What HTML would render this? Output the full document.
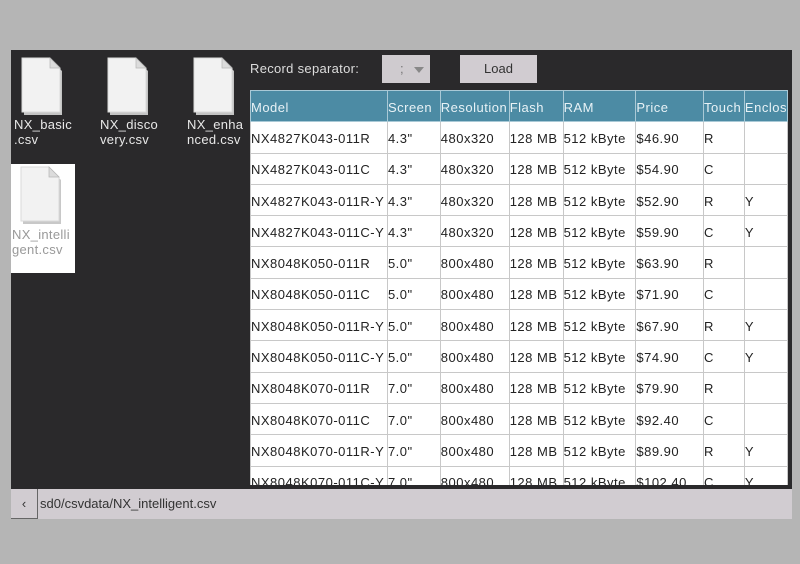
<!DOCTYPE html>
<html><head><style>
body{margin:0;width:800px;height:564px;background:#b5b5b5;position:relative;overflow:hidden;font-family:"Liberation Sans",sans-serif;}
.panel{position:absolute;left:11px;top:50px;width:781px;height:439px;background:#2a292b;}
.ic{position:absolute;}
.lbl{position:absolute;color:#e8e8e8;font-size:13px;line-height:15px;letter-spacing:0.3px;}
.sel{position:absolute;left:11px;top:164px;width:64px;height:109px;background:#fff;}
.tw{position:absolute;left:250px;top:90px;width:538px;height:395px;overflow:hidden;}
table{border-collapse:collapse;font-size:13px;table-layout:fixed;letter-spacing:0.5px;}
td{border:1px solid #c8c8c8;height:28.3px;padding:2px 0 0 0;white-space:nowrap;overflow:hidden;color:#222;background:#fff;}
tr.h td{background:#4c8ba4;color:#e8f2f6;border-color:#a9c9d6;}
.bar{position:absolute;left:11px;top:489px;width:781px;height:30px;background:#d1ccd1;}
</style></head><body>
<div class="panel"></div>
<svg class="ic" style="left:21px;top:57px" width="44" height="60"><path d="M3 4 L31 4 L41 14 L41 58 L3 58 Z" fill="#c4c4c4"/><path d="M1 1 L29 1 L39 11 L39 55 L1 55 Z" fill="#f2f2f2" stroke="#dadada"/><path d="M29 1 L29 11 L39 11 Z" fill="#dcdcdc" stroke="#b5b5b5" stroke-width="0.7"/></svg>
<svg class="ic" style="left:107px;top:57px" width="44" height="60"><path d="M3 4 L31 4 L41 14 L41 58 L3 58 Z" fill="#c4c4c4"/><path d="M1 1 L29 1 L39 11 L39 55 L1 55 Z" fill="#f2f2f2" stroke="#dadada"/><path d="M29 1 L29 11 L39 11 Z" fill="#dcdcdc" stroke="#b5b5b5" stroke-width="0.7"/></svg>
<svg class="ic" style="left:193px;top:57px" width="44" height="60"><path d="M3 4 L31 4 L41 14 L41 58 L3 58 Z" fill="#c4c4c4"/><path d="M1 1 L29 1 L39 11 L39 55 L1 55 Z" fill="#f2f2f2" stroke="#dadada"/><path d="M29 1 L29 11 L39 11 Z" fill="#dcdcdc" stroke="#b5b5b5" stroke-width="0.7"/></svg>
<div class="lbl" style="left:14px;top:117px">NX_basic<br>.csv</div>
<div class="lbl" style="left:100px;top:117px">NX_disco<br>very.csv</div>
<div class="lbl" style="left:187px;top:117px">NX_enha<br>nced.csv</div>
<div class="sel"></div>
<svg class="ic" style="left:20px;top:166px" width="44" height="60"><path d="M3 4 L31 4 L41 14 L41 58 L3 58 Z" fill="#c8c8c8"/><path d="M1 1 L29 1 L39 11 L39 55 L1 55 Z" fill="#f2f2f2" stroke="#dadada"/><path d="M29 1 L29 11 L39 11 Z" fill="#dcdcdc" stroke="#b5b5b5" stroke-width="0.7"/></svg>
<div class="lbl" style="left:12px;top:227px;color:#999">NX_intelli<br>gent.csv</div>
<div class="lbl" style="left:250px;top:61px;font-size:13px;color:#ddd">Record separator:</div>
<div style="position:absolute;left:382px;top:55px;width:48px;height:28px;background:#cfcbcf;color:#777;font-size:13px;line-height:28px;"><span style="margin-left:18px">;</span><span style="position:absolute;left:32px;top:12px;border:5px solid transparent;border-top:6px solid #888;width:0;height:0;"></span></div>
<div style="position:absolute;left:460px;top:55px;width:77px;height:28px;background:#d1ccd1;color:#333;font-size:13px;line-height:28px;text-align:center;">Load</div>
<div class="tw"><table>
<colgroup><col style="width:137px"><col style="width:53px"><col style="width:69px"><col style="width:54px"><col style="width:73px"><col style="width:68px"><col style="width:41px"><col style="width:42px"></colgroup>
<tr class="h"><td>Model</td><td>Screen</td><td>Resolution</td><td>Flash</td><td>RAM</td><td>Price</td><td>Touch</td><td>Enclos</td></tr>
<tr><td>NX4827K043-011R</td><td>4.3"</td><td>480x320</td><td>128 MB</td><td>512 kByte</td><td>$46.90</td><td>R</td><td></td></tr>
<tr><td>NX4827K043-011C</td><td>4.3"</td><td>480x320</td><td>128 MB</td><td>512 kByte</td><td>$54.90</td><td>C</td><td></td></tr>
<tr><td>NX4827K043-011R-Y</td><td>4.3"</td><td>480x320</td><td>128 MB</td><td>512 kByte</td><td>$52.90</td><td>R</td><td>Y</td></tr>
<tr><td>NX4827K043-011C-Y</td><td>4.3"</td><td>480x320</td><td>128 MB</td><td>512 kByte</td><td>$59.90</td><td>C</td><td>Y</td></tr>
<tr><td>NX8048K050-011R</td><td>5.0"</td><td>800x480</td><td>128 MB</td><td>512 kByte</td><td>$63.90</td><td>R</td><td></td></tr>
<tr><td>NX8048K050-011C</td><td>5.0"</td><td>800x480</td><td>128 MB</td><td>512 kByte</td><td>$71.90</td><td>C</td><td></td></tr>
<tr><td>NX8048K050-011R-Y</td><td>5.0"</td><td>800x480</td><td>128 MB</td><td>512 kByte</td><td>$67.90</td><td>R</td><td>Y</td></tr>
<tr><td>NX8048K050-011C-Y</td><td>5.0"</td><td>800x480</td><td>128 MB</td><td>512 kByte</td><td>$74.90</td><td>C</td><td>Y</td></tr>
<tr><td>NX8048K070-011R</td><td>7.0"</td><td>800x480</td><td>128 MB</td><td>512 kByte</td><td>$79.90</td><td>R</td><td></td></tr>
<tr><td>NX8048K070-011C</td><td>7.0"</td><td>800x480</td><td>128 MB</td><td>512 kByte</td><td>$92.40</td><td>C</td><td></td></tr>
<tr><td>NX8048K070-011R-Y</td><td>7.0"</td><td>800x480</td><td>128 MB</td><td>512 kByte</td><td>$89.90</td><td>R</td><td>Y</td></tr>
<tr><td>NX8048K070-011C-Y</td><td>7.0"</td><td>800x480</td><td>128 MB</td><td>512 kByte</td><td>$102.40</td><td>C</td><td>Y</td></tr>
</table></div>
<div class="bar"></div>
<div style="position:absolute;left:11px;top:489px;width:26px;height:29px;border-right:1px solid #666;border-bottom:1px solid #666;color:#333;font-size:13px;line-height:29px;text-align:center;">‹</div>
<div style="position:absolute;left:40px;top:496px;color:#333;font-size:13px;">sd0/csvdata/NX_intelligent.csv</div>
</body></html>
